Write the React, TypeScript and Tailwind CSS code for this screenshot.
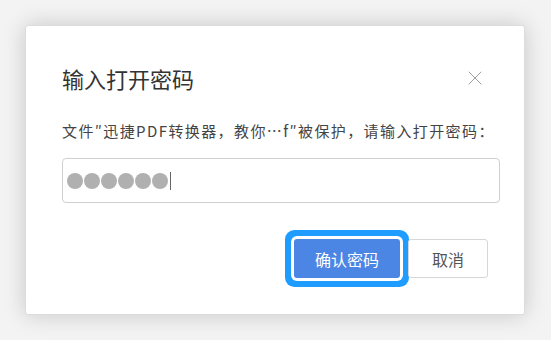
import { X } from "lucide-react";

const FONT = { fontFamily: '"Noto Sans CJK SC", "Noto Sans", sans-serif' };

export default function App() {
  return (
    <div className="w-[551px] h-[340px] bg-[#f3f3f3] overflow-hidden pt-[25px] pl-[25px]" style={FONT}>
      <div className="w-[500px] h-[290px] bg-white rounded-[3px] border border-[#dcdcdc] shadow-[0_0_22px_rgba(0,0,0,0.18)] pl-[36px] pr-[25px] pt-[37px]">
        {/* Header */}
        <div className="flex items-center justify-between h-[30px]">
          <h1 className="text-[22px] leading-[30px] text-[#333]">输入打开密码</h1>
          <button className="mr-[12px] text-[#a0a0a0]">
            <X size={24} strokeWidth={1} />
          </button>
        </div>

        {/* Message */}
        <p className="mt-[28px] text-[15px] leading-[20px] text-[#444] whitespace-nowrap tracking-[1.4px]">
          文件″迅捷PDF转换器，教你…f″被保护，请输入打开密码：
        </p>

        {/* Password field */}
        <div className="mt-[17px] h-[45px] w-[438px] border border-[#cfcfcf] rounded-[4px] flex items-center pl-[4px] gap-[1px]">
          {[0, 1, 2, 3, 4, 5].map((i) => (
            <span key={i} className="w-[16px] h-[16px] rounded-full bg-[#b0b0b0]" />
          ))}
          <span className="ml-[1px] w-px h-[18px] bg-[#666]" />
        </div>

        {/* Actions */}
        <div className="mt-[36px] flex justify-end gap-[8px] pr-[11px]">
          <button className="w-[106px] h-[39px] rounded-[3px] bg-[#4c86e4] text-white text-[16px] ring-[6px] ring-[#1e9cff] ring-offset-[3px] ring-offset-white">
            确认密码
          </button>
          <button className="w-[80px] h-[39px] rounded-[3px] border border-[#d6d6d6] bg-white text-[#555] text-[16px]">
            取消
          </button>
        </div>
      </div>
    </div>
  );
}
